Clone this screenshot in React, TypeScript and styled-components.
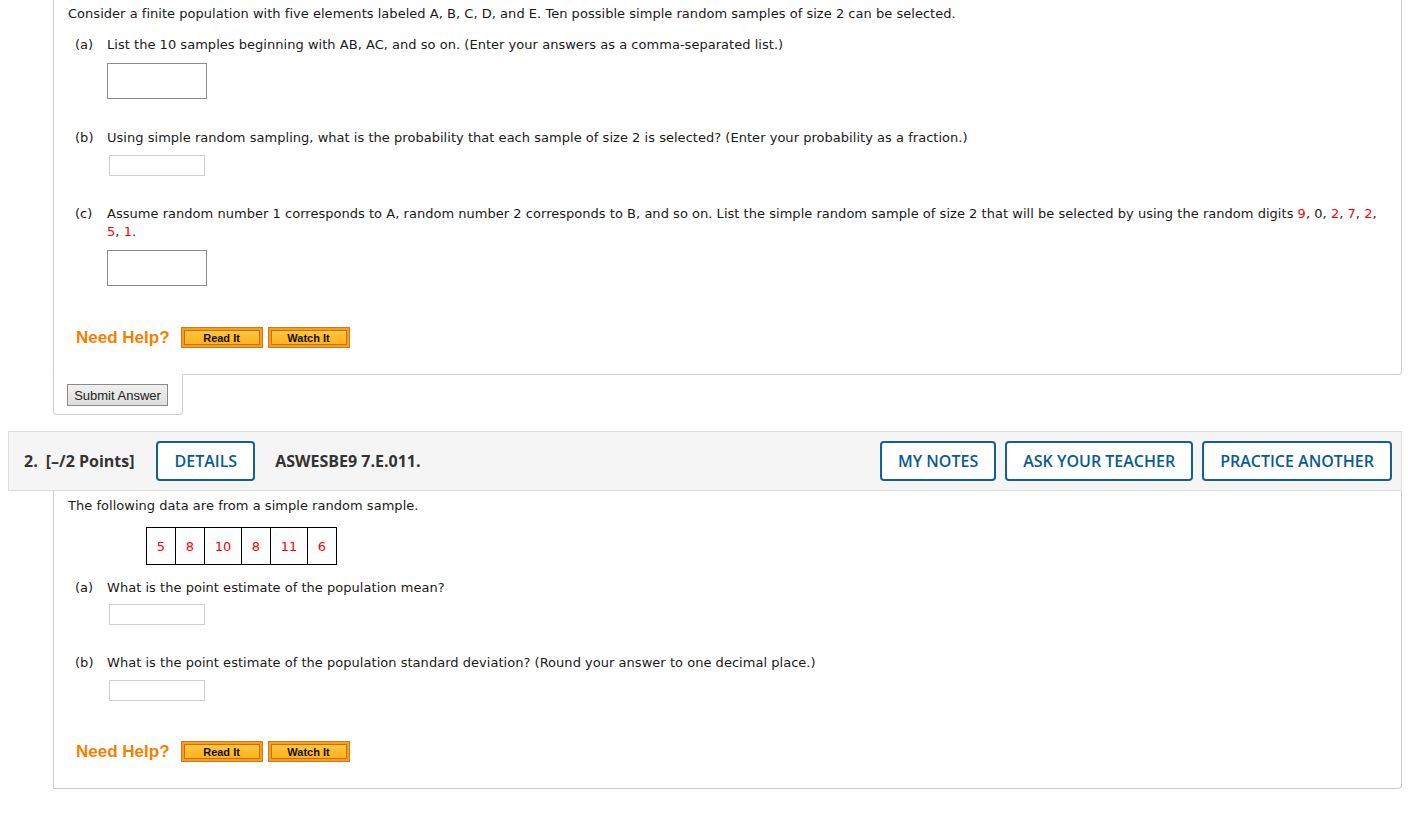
import React from 'react';
import styled, { createGlobalStyle } from 'styled-components';

const GlobalStyle = createGlobalStyle`
  html,
  body {
    margin: 0;
    padding: 0;
    background: #fff;
  }

  body {
    font-family: 'DejaVu Sans', Verdana, sans-serif;
    font-size: 13px;
    letter-spacing: 0.03px;
    color: #1a1a1a;
  }
`;

const Page = styled.div`
  width: 1394px;
  padding-left: 8px;
  padding-bottom: 30px;
`;

const Panel = styled.div<{ $padTop: number }>`
  margin-left: 45px;
  border: 1px solid #cdcdcd;
  border-top: none;
  border-radius: 0 0 4px 0;
  padding: ${({ $padTop }) => $padTop}px 14px 26px 14px;
`;

const Intro = styled.p`
  margin: 0 0 -1px;
  padding-top: 1px;
  line-height: 18px;
`;

const Part = styled.div<{ $mt: number }>`
  display: flex;
  margin-top: ${({ $mt }) => $mt}px;
  margin-bottom: -1px;
  padding-top: 1px;
  line-height: 18px;
`;

const PartLabel = styled.span`
  flex: none;
  width: 32px;
  padding-left: 7px;
`;

const PartText = styled.span`
  flex: 1;
  padding-right: 10px;
`;

const Red = styled.span`
  color: #f00;
`;

const AnswerBox = styled.div<{ $mt: number; $big?: boolean }>`
  margin-top: ${({ $mt }) => $mt}px;
  margin-left: ${({ $big }) => ($big ? 39 : 41)}px;
  width: ${({ $big }) => ($big ? 100 : 96)}px;
  height: ${({ $big }) => ($big ? 36 : 21)}px;
  box-sizing: border-box;
  border: 1px solid ${({ $big }) => ($big ? '#8c8c8c' : '#cfcfcf')};
  background: #fff;
`;

const HelpRow = styled.div<{ $mt: number }>`
  display: flex;
  align-items: center;
  margin-top: ${({ $mt }) => $mt}px;
  margin-left: 8px;
  height: 21px;
`;

const HelpText = styled.span`
  font-family: 'Liberation Sans', Arial, sans-serif;
  font-weight: bold;
  font-size: 17px;
  letter-spacing: 0;
  color: #f77f00;
  margin-right: 11px;
`;

const HelpButton = styled.button`
  box-sizing: border-box;
  width: 82px;
  height: 21px;
  margin-right: 5px;
  padding: 2px;
  border: 1px solid #c87a28;
  background: #ff9d12;
  cursor: pointer;

  span {
    display: flex;
    align-items: center;
    justify-content: center;
    height: 100%;
    box-sizing: border-box;
    border: 1px solid #c2700a;
    background: linear-gradient(#ffc640, #ffb21e);
    font-family: 'Liberation Sans', Arial, sans-serif;
    font-weight: bold;
    font-size: 11px;
    letter-spacing: 0;
    color: #111;
  }
`;

const SubmitTab = styled.div`
  margin-left: 45px;
  margin-top: -1px;
  width: 130px;
  box-sizing: border-box;
  height: 41px;
  padding: 9px 0 0 13px;
  border: 1px solid #cdcdcd;
  border-top: 1px solid #fff;
  border-radius: 0 0 4px 4px;
  background: #fff;
`;

const SubmitButton = styled.button`
  box-sizing: border-box;
  height: 22px;
  width: 101px;
  padding: 0;
  border: 1px solid #8a8a8a;
  background: linear-gradient(#f0f0f0, #dedede);
  font-family: 'Liberation Sans', Arial, sans-serif;
  font-size: 13px;
  letter-spacing: 0;
  color: #222;
`;

const QuestionHeader = styled.div`
  margin-top: 16px;
  height: 60px;
  box-sizing: border-box;
  display: flex;
  align-items: center;
  padding: 0 9px 0 15px;
  background: #f5f5f5;
  border: 1px solid #dedede;
  font-family: 'Open Sans', sans-serif;
  font-weight: 700;
  letter-spacing: 0;
  color: #333;
`;

const Num = styled.span`
  font-size: 16px;
  margin-right: 8px;
`;

const Points = styled.span`
  font-size: 16px;
  margin-right: 22px;
`;

const Code = styled.span`
  font-size: 16px;
  margin-left: 20px;
  flex: 1;
`;

const OutlineButton = styled.button`
  box-sizing: border-box;
  height: 40px;
  padding: 0 16px;
  margin-left: 9px;
  border: 2px solid #0f6198;
  border-radius: 4px;
  background: #fff;
  font-family: 'Open Sans', sans-serif;
  font-weight: 600;
  font-size: 16px;
  color: #0b5b8f;
  letter-spacing: 0;
  cursor: pointer;

  &:first-of-type {
    margin-left: 0;
  }
`;

const DataTable = styled.table`
  margin-top: 13px;
  margin-left: 78px;
  border-collapse: collapse;
`;

const DataCell = styled.td<{ $wide: boolean }>`
  box-sizing: border-box;
  width: ${({ $wide }) => ($wide ? 37 : 29)}px;
  height: 37px;
  padding: 0;
  border: 1px solid #000;
  color: #f00;
  text-align: center;
  font-size: 13px;
`;

const Help = ({ mt }: { mt: number }) => (
  <HelpRow $mt={mt}>
    <HelpText>Need Help?</HelpText>
    <HelpButton>
      <span>Read It</span>
    </HelpButton>
    <HelpButton>
      <span>Watch It</span>
    </HelpButton>
  </HelpRow>
);

const data = [5, 8, 10, 8, 11, 6];

export default function App() {
  return (
    <Page>
      <GlobalStyle />
      <Panel $padTop={4}>
        <Intro>
          Consider a finite population with five elements labeled A, B, C, D, and E. Ten possible simple random
          samples of size 2 can be selected.
        </Intro>
        <Part $mt={13}>
          <PartLabel>(a)</PartLabel>
          <PartText>
            List the 10 samples beginning with AB, AC, and so on. (Enter your answers as a comma-separated list.)
          </PartText>
        </Part>
        <AnswerBox $mt={10} $big />
        <Part $mt={29}>
          <PartLabel>(b)</PartLabel>
          <PartText>
            Using simple random sampling, what is the probability that each sample of size 2 is selected? (Enter
            your probability as a fraction.)
          </PartText>
        </Part>
        <AnswerBox $mt={9} />
        <Part $mt={28}>
          <PartLabel>(c)</PartLabel>
          <PartText>
            Assume random number 1 corresponds to A, random number 2 corresponds to B, and so on. List the simple
            random sample of size 2 that will be selected by using the random digits <Red>9</Red>, 0, <Red>2</Red>,{' '}
            <Red>7</Red>, <Red>2</Red>, <Red>5</Red>, <Red>1</Red>.
          </PartText>
        </Part>
        <AnswerBox $mt={10} $big />
        <Help mt={41} />
      </Panel>
      <SubmitTab>
        <SubmitButton>Submit Answer</SubmitButton>
      </SubmitTab>

      <QuestionHeader>
        <Num>2.</Num>
        <Points>[–/2 Points]</Points>
        <OutlineButton>DETAILS</OutlineButton>
        <Code>ASWESBE9 7.E.011.</Code>
        <OutlineButton>MY NOTES</OutlineButton>
        <OutlineButton>ASK YOUR TEACHER</OutlineButton>
        <OutlineButton>PRACTICE ANOTHER</OutlineButton>
      </QuestionHeader>
      <Panel $padTop={5}>
        <Intro>The following data are from a simple random sample.</Intro>
        <DataTable>
          <tbody>
            <tr>
              {data.map((v, i) => (
                <DataCell key={i} $wide={v >= 10}>
                  {v}
                </DataCell>
              ))}
            </tr>
          </tbody>
        </DataTable>
        <Part $mt={13}>
          <PartLabel>(a)</PartLabel>
          <PartText>What is the point estimate of the population mean?</PartText>
        </Part>
        <AnswerBox $mt={8} />
        <Part $mt={28}>
          <PartLabel>(b)</PartLabel>
          <PartText>
            What is the point estimate of the population standard deviation? (Round your answer to one decimal
            place.)
          </PartText>
        </Part>
        <AnswerBox $mt={9} />
        <Help mt={40} />
      </Panel>
    </Page>
  );
}
